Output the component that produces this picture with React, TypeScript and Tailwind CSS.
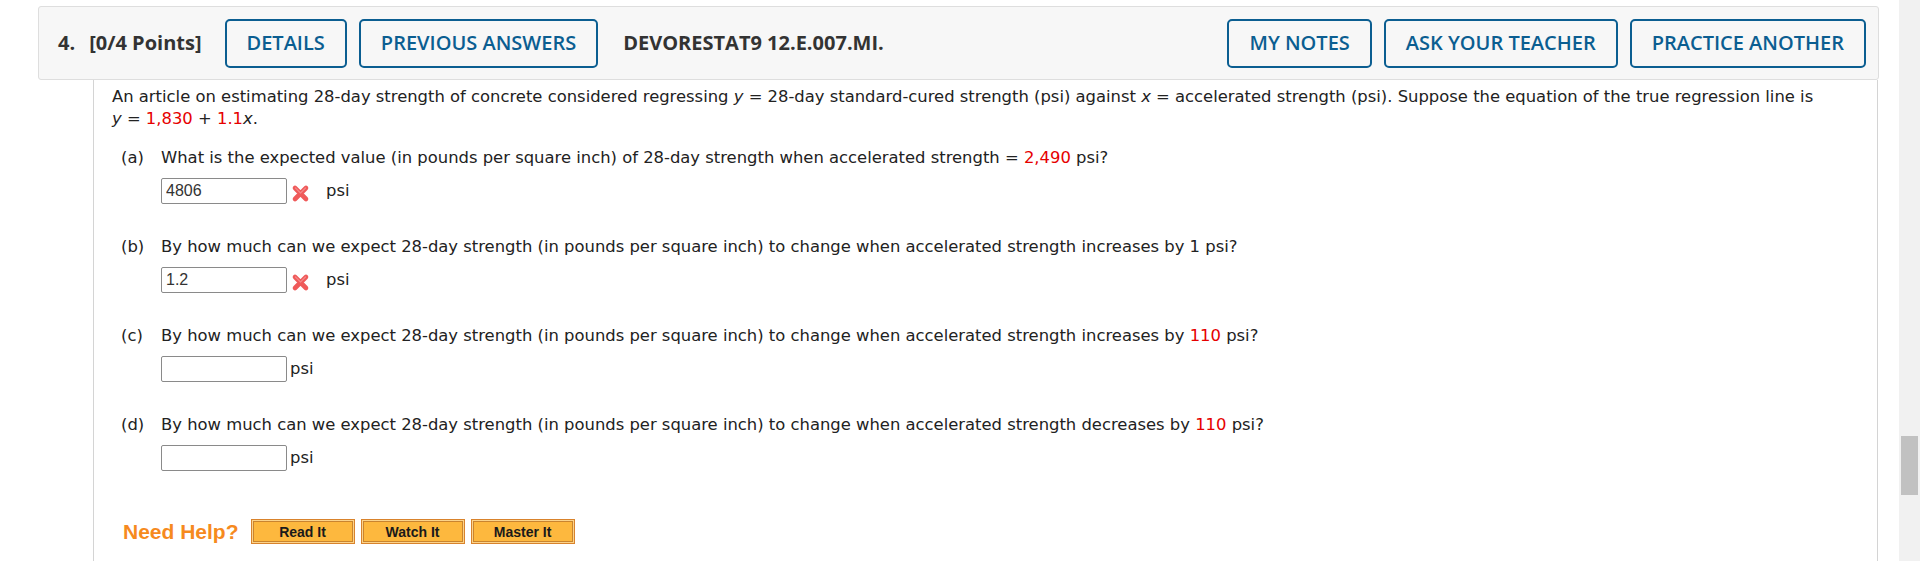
import React from "react";

const headerBtn =
  "h-[49px] px-[20px] border-2 border-[#0b5e91] rounded-[5px] text-[#0b5e91] text-[20px] font-semibold bg-[#f7f7f7] leading-none";

const XMark = () => (
  <svg width="19" height="19" viewBox="0 0 19 19" className="ml-[4px] mt-[5px]">
    <path
      d="M4 4 L15 15 M15 4 L4 15"
      stroke="#ef5a5a"
      strokeWidth="4.6"
      strokeLinecap="round"
    />
    <path
      d="M4.5 4 L9.5 9 M14.5 4 L9.5 9"
      stroke="#f79a9a"
      strokeWidth="1.2"
      strokeLinecap="round"
      opacity="0.7"
    />
  </svg>
);

const Red = ({ children }: { children: React.ReactNode }) => (
  <span className="text-[#e60000]">{children}</span>
);

type Part = {
  label: string;
  text: React.ReactNode;
  value: string;
  wrong: boolean;
};

const parts: Part[] = [
  {
    label: "(a)",
    text: (
      <>
        What is the expected value (in pounds per square inch) of 28-day strength when accelerated
        strength = <Red>2,490</Red> psi?
      </>
    ),
    value: "4806",
    wrong: true,
  },
  {
    label: "(b)",
    text: (
      <>
        By how much can we expect 28-day strength (in pounds per square inch) to change when
        accelerated strength increases by 1 psi?
      </>
    ),
    value: "1.2",
    wrong: true,
  },
  {
    label: "(c)",
    text: (
      <>
        By how much can we expect 28-day strength (in pounds per square inch) to change when
        accelerated strength increases by <Red>110</Red> psi?
      </>
    ),
    value: "",
    wrong: false,
  },
  {
    label: "(d)",
    text: (
      <>
        By how much can we expect 28-day strength (in pounds per square inch) to change when
        accelerated strength decreases by <Red>110</Red> psi?
      </>
    ),
    value: "",
    wrong: false,
  },
];

const HelpButton = ({ label }: { label: string }) => (
  <button className="w-[104px] h-[25px] border border-[#d9832c] bg-[#fdb83e] shadow-[inset_0_0_0_1px_#fbd38a,inset_0_0_0_2px_#c9842f] text-[14px] font-bold text-[#1a1a1a] font-['Liberation_Sans',Arial,sans-serif] leading-none">
    {label}
  </button>
);

export default function App() {
  return (
    <div className="flex h-[561px] overflow-hidden bg-white">
      <div className="flex-1 flex flex-col pl-[38px] pr-[20px] pt-[6px]">
        {/* question header */}
        <div className="h-[74px] shrink-0 flex items-center border border-[#dedede] rounded-[3px] bg-[#f7f7f7] pl-[19px] pr-[12px] font-['Open_Sans',sans-serif]">
          <div className="text-[20px] font-bold text-[#333] mr-[23px]">
            4.<span className="ml-[14px]">[0/4 Points]</span>
          </div>
          <button className={headerBtn}>DETAILS</button>
          <button className={headerBtn + " ml-[12px]"}>PREVIOUS ANSWERS</button>
          <div className="ml-[25px] text-[20px] font-bold text-[#333]">DEVORESTAT9 12.E.007.MI.</div>
          <div className="ml-auto flex gap-[12px]">
            <button className={headerBtn}>MY NOTES</button>
            <button className={headerBtn}>ASK YOUR TEACHER</button>
            <button className={headerBtn}>PRACTICE ANOTHER</button>
          </div>
        </div>

        {/* question body */}
        <div className="flex-1 ml-[55px] mr-[1px] border-l border-r border-[#d4d4d4] bg-white pl-[18px] pr-[20px] pt-[6px] font-['DejaVu_Sans',Verdana,sans-serif] text-[16.4px] leading-[22px] text-[#222]">
          <p>
            An article on estimating 28-day strength of concrete considered regressing <i>y</i> = 28-day
            standard-cured strength (psi) against <i>x</i> = accelerated strength (psi). Suppose the
            equation of the true regression line is{" "}
            <span className="whitespace-nowrap">
              <i>y</i> = <Red>1,830</Red> + <Red>1.1</Red>
              <i>x</i>.
            </span>
          </p>

          <div className="mt-[17px] flex flex-col gap-[32px]">
            {parts.map((p) => (
              <div key={p.label} className="pl-[9px]">
                <div className="flex">
                  <span className="w-[40px] shrink-0">{p.label}</span>
                  <span>{p.text}</span>
                </div>
                <div className="flex items-center mt-[9px] ml-[40px] h-[26px]">
                  <input
                    readOnly
                    value={p.value}
                    className="w-[126px] h-[26px] border border-[#8a8a8a] rounded-[2px] px-[4px] text-[16px] text-[#333] font-['Liberation_Sans',Arial,sans-serif] bg-white outline-none"
                  />
                  {p.wrong ? (
                    <>
                      <XMark />
                      <span className="ml-[16px]">psi</span>
                    </>
                  ) : (
                    <span className="ml-[3px]">psi</span>
                  )}
                </div>
              </div>
            ))}
          </div>

          <div className="mt-[48px] flex items-center gap-[6px] pl-[11px]">
            <span className="text-[21px] font-bold text-[#f68a1e] font-['Liberation_Sans',Arial,sans-serif] mr-[6px]">
              Need Help?
            </span>
            <HelpButton label="Read It" />
            <HelpButton label="Watch It" />
            <HelpButton label="Master It" />
          </div>
        </div>
      </div>

      {/* page scrollbar */}
      <div className="w-[21px] shrink-0 bg-[#f1f1f1] pt-[436px] pl-[2px] pr-[2px]">
        <div className="h-[59px] bg-[#c1c1c1]" />
      </div>
    </div>
  );
}
